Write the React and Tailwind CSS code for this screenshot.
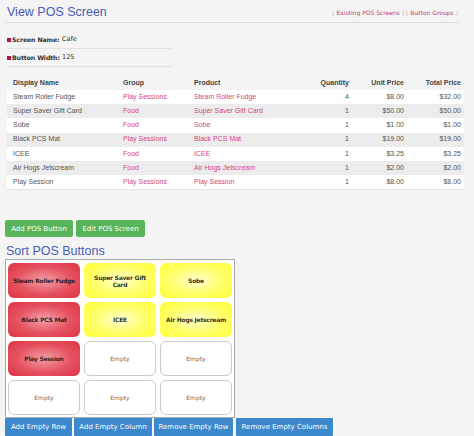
const rows = [
  { name: 'Steam Roller Fudge', group: 'Play Sessions', product: 'Steam Roller Fudge', qty: 4, unit: '$8.00', total: '$32.00' },
  { name: 'Super Saver Gift Card', group: 'Food', product: 'Super Saver Gift Card', qty: 1, unit: '$50.00', total: '$50.00' },
  { name: 'Sobe', group: 'Food', product: 'Sobe', qty: 1, unit: '$1.00', total: '$1.00' },
  { name: 'Black PCS Mat', group: 'Play Sessions', product: 'Black PCS Mat', qty: 1, unit: '$19.00', total: '$19.00' },
  { name: 'ICEE', group: 'Food', product: 'ICEE', qty: 1, unit: '$3.25', total: '$3.25' },
  { name: 'Air Hogs Jetscream', group: 'Food', product: 'Air Hogs Jetscream', qty: 1, unit: '$2.00', total: '$2.00' },
  { name: 'Play Session', group: 'Play Sessions', product: 'Play Session', qty: 1, unit: '$8.00', total: '$8.00' },
];

const tiles = [
  { label: 'Steam Roller Fudge', kind: 'red' },
  { label: 'Super Saver Gift Card', kind: 'yellow' },
  { label: 'Sobe', kind: 'yellow' },
  { label: 'Black PCS Mat', kind: 'red' },
  { label: 'ICEE', kind: 'yellow' },
  { label: 'Air Hogs Jetscream', kind: 'yellow' },
  { label: 'Play Session', kind: 'red' },
  { label: 'Empty', kind: 'empty' },
  { label: 'Empty', kind: 'empty' },
  { label: 'Empty', kind: 'empty' },
  { label: 'Empty', kind: 'empty' },
  { label: 'Empty', kind: 'empty' },
];

const tileClass = {
  red: 'bg-[radial-gradient(ellipse_at_center,#f1a0a8_0%,#e6515e_55%,#dc3444_100%)] text-[#3b1d20] font-bold tracking-[-0.25px]',
  yellow: 'bg-[radial-gradient(ellipse_at_center,#ffffd0_0%,#ffff66_55%,#ffff3a_100%)] text-[#3a3a20] font-bold tracking-[-0.25px]',
  empty: 'bg-white border border-[#c9c9c9] text-[#666]',
};

const Field = ({ label, value }) => (
  <div className="flex items-center h-[18px] border-b border-[#e2e2e2]">
    <span className="w-[4px] h-[4px] bg-[#b3124c] mr-[1px] shrink-0"></span>
    <span className="w-[50px] shrink-0 whitespace-nowrap font-bold text-[6.2px] tracking-[-0.1px] text-[#333]">{label}</span>
    <span className="text-[6.5px] text-[#333]">{value}</span>
  </div>
);

const App = () => {
  return (
    <div className="w-[474px] h-[436px] overflow-hidden bg-[#f4f4f4] px-[5px] font-['Liberation_Sans',Arial,sans-serif]">
      {/* header */}
      <div className="flex items-end justify-between pt-[5px] pb-[2px] border-b border-[#dadada] mr-[10px]">
        <h1 className="text-[12.5px] leading-[15px] text-[#4a5cb4] pl-[2px]">View POS Screen</h1>
        <div className="text-[6px] font-['DejaVu_Sans',sans-serif] pb-[3px] pr-[1px]">
          <span className="text-[#bbb]">[ </span>
          <span className="text-[#c9366e]">Existing POS Screens</span>
          <span className="text-[#bbb]"> ] [ </span>
          <span className="text-[#c9366e]">Button Groups</span>
          <span className="text-[#bbb]"> ]</span>
        </div>
      </div>

      <div className="w-[165px] ml-[2px] mt-[8px] font-['DejaVu_Sans',sans-serif]">
        <Field label="Screen Name:" value="Cafe" />
        <Field label="Button Width:" value="125" />
      </div>

      {/* table */}
      <div className="ml-[2px] mt-[9px] w-[457px] text-[7px] text-[#555]">
        <div className="grid grid-cols-[110px_71px_112px_52px_55px_57px] h-[14px] items-center font-bold text-[#444]">
          <div className="pl-[6px]">Display Name</div>
          <div className="pl-[6px]">Group</div>
          <div className="pl-[6px]">Product</div>
          <div className="text-right pr-[3px]">Quantity</div>
          <div className="text-right pr-[3px]">Unit Price</div>
          <div className="text-right pr-[3px]">Total Price</div>
        </div>
        {rows.map((r, i) => (
          <div
            key={i}
            className={`grid grid-cols-[110px_71px_112px_52px_55px_57px] h-[14.2px] items-center ${i % 2 === 0 ? 'bg-white' : 'bg-[#ececec]'}`}
          >
            <div className="pl-[6px]">{r.name}</div>
            <div className="pl-[6px] text-[#d9467d]">{r.group}</div>
            <div className="pl-[6px] text-[#d9467d]">{r.product}</div>
            <div className="text-right pr-[3px]">{r.qty}</div>
            <div className="text-right pr-[3px]">{r.unit}</div>
            <div className="text-right pr-[3px]">{r.total}</div>
          </div>
        ))}
        <div className="border-t border-[#e2e2e2]"></div>
      </div>

      <div className="flex gap-[3px] mt-[30px] font-['DejaVu_Sans',sans-serif] text-[7px] text-white">
        <button className="h-[17px] w-[68px] rounded-[2px] bg-[#57b45a]">Add POS Button</button>
        <button className="h-[17px] w-[69px] rounded-[2px] bg-[#57b45a]">Edit POS Screen</button>
      </div>

      <h2 className="mt-[7px] text-[12.5px] leading-[15px] text-[#4a5cb4] pl-[1px]">Sort POS Buttons</h2>

      <div className="w-[230px] border border-[#a9a9a9] bg-white pt-[3px] px-[2px] pb-[2px] font-['DejaVu_Sans',sans-serif]">
        <div className="grid grid-cols-[72px_72px_72px] gap-x-[4px] gap-y-[4px]">
          {tiles.map((t, i) => (
            <div
              key={i}
              className={`h-[35px] rounded-[6px] flex items-center justify-center text-center px-[2px] leading-[7px] text-[6px] ${tileClass[t.kind]}`}
            >
              {t.label}
            </div>
          ))}
        </div>
      </div>

      <div className="flex gap-[2px] font-['DejaVu_Sans',sans-serif] text-[7px] text-white">
        <button className="h-[18px] w-[67px] bg-[#3c88cd] rounded-[1px]">Add Empty Row</button>
        <button className="h-[18px] w-[78px] bg-[#3c88cd] rounded-[1px]">Add Empty Column</button>
        <button className="h-[18px] w-[79px] bg-[#3c88cd] rounded-[1px]">Remove Empty Row</button>
        <button className="h-[18px] w-[97px] bg-[#3c88cd] rounded-[1px] ml-[1px]">Remove Empty Columns</button>
      </div>
    </div>
  );
};

export default App;
